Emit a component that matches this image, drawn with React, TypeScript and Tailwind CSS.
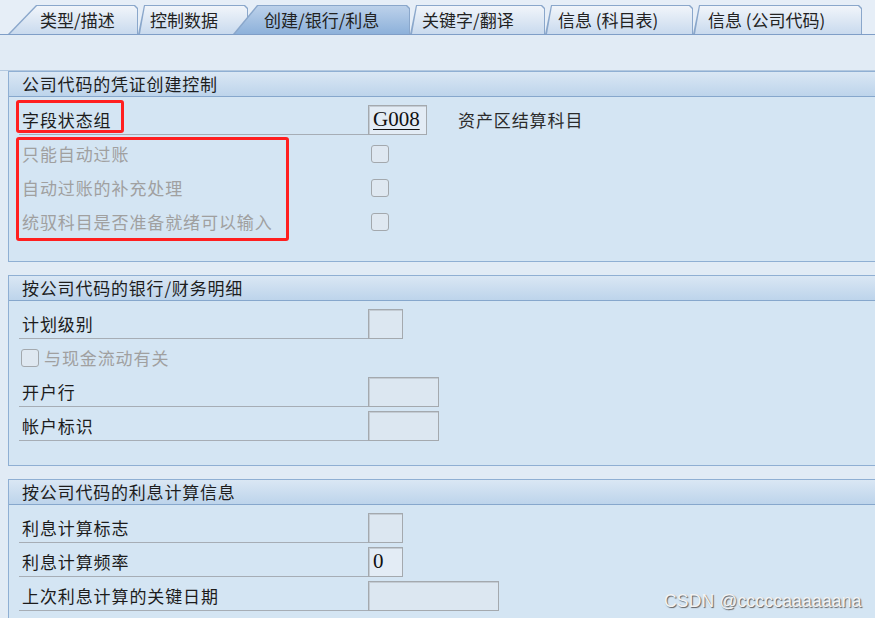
import React from "react";

const cjk = { fontFamily: '"Noto Sans CJK SC", "Noto Sans", sans-serif' };

const tabs = [
  { label: "类型/描述", width: 130, slant: 28, ml: 8, pl: 32, active: false },
  { label: "控制数据", width: 110, slant: 6, ml: 0, pl: 12, active: false },
  { label: "创建/银行/利息", width: 177, slant: 24, ml: -15, pl: 31, active: true },
  { label: "关键字/翻译", width: 135, slant: 6, ml: 0, pl: 12, active: false },
  { label: "信息 (科目表)", width: 148, slant: 6, ml: 0, pl: 13, active: false },
  { label: "信息 (公司代码)", width: 169, slant: 6, ml: 0, pl: 15, active: false },
];

function Tab({ label, width, slant, ml, pl, active }: (typeof tabs)[number]) {
  const outer = `polygon(${slant}px 0, calc(100% - 3px) 0, 100% 3px, 100% 100%, 0 100%)`;
  const inner = `polygon(${slant}px 0, calc(100% - 3px) 0, 100% 3px, 100% 100%, 1px 100%)`;
  return (
    <div className={`relative h-[29px] shrink-0 bg-[#8aa7cb] ${active ? "z-10" : ""}`} style={{ width, marginLeft: ml, clipPath: outer }}>
      <div
        className={`absolute inset-x-[1px] top-[1px] bottom-0 flex items-center text-[17px] text-[#222] ${active ? "bg-gradient-to-b from-[#bcd1ea] to-[#8db1da]" : "bg-gradient-to-b from-[#f1f5fa] to-[#c9daee]"}`}
        style={{ clipPath: inner, paddingLeft: pl - 1 }}
      >
        {label}
      </div>
    </div>
  );
}

function Input({ w, value }: { w: number; value?: string }) {
  return (
    <div
      className={`h-[30px] border border-[#a4a9ae] ${value ? "bg-[#e3ecf5]" : "bg-[#dce7f1]"} flex items-center pl-[4px] text-[21px] text-[#111] shadow-[inset_1px_1px_0_#c4ccd4]`}
      style={{ width: w, fontFamily: '"Liberation Serif", serif' }}
    >
      {value && <span className={value.length > 1 ? "underline decoration-1 underline-offset-[3px]" : ""}>{value}</span>}
    </div>
  );
}

function Checkbox() {
  return <div className="w-[18px] h-[18px] rounded-[3px] border border-[#a3a8ad] bg-[#dfe8f1]" />;
}

function FieldRow({ label, w, value, note }: { label: string; w: number; value?: string; note?: string }) {
  return (
    <div className="flex items-end h-[34px]">
      <div className="w-[349px] h-full flex items-center pl-[3px] pt-[4px] border-b border-[#a6adb5] text-[17px] tracking-[0.9px] text-[#1c1c1c]">{label}</div>
      <Input w={w} value={value} />
      {note && <div className="ml-[31px] self-center pt-[4px] text-[17px] tracking-[0.9px] text-[#2a2a2a]">{note}</div>}
    </div>
  );
}

function CheckRow({ label }: { label: string }) {
  return (
    <div className="flex items-center h-[34px] pt-[3px]">
      <div className="w-[349px] pl-[3px] text-[17px] tracking-[0.9px] text-[#a0a0a0]">{label}</div>
      <div className="ml-[3px]"><Checkbox /></div>
    </div>
  );
}

function Panel({ title, children, bodyH }: { title: string; children: React.ReactNode; bodyH: number }) {
  return (
    <div className="ml-[8px] border-l border-t border-b border-[#8fafd3]">
      <div className="h-[25px] flex items-center pl-[13px] border-b border-[#86a7cc] bg-gradient-to-b from-[#dae7f4] to-[#bdd4eb] text-[17px] tracking-[0.8px] text-[#1d1d1d]">{title}</div>
      <div className="bg-[#d4e5f3] pl-[10px] pt-[4px]" style={{ height: bodyH }}>{children}</div>
    </div>
  );
}

export default function App() {
  return (
    <div className="relative w-[875px] h-[618px] overflow-hidden bg-[#e1ebf5]" style={cjk}>
      <div className="flex items-end pt-[5px] border-b border-[#7f9ec7] bg-[#e6eef7]">
        {tabs.map((t) => <Tab key={t.label} {...t} />)}
      </div>
      <div className="h-[36px] border-b border-[#b3c8df]" />
      <div className="flex flex-col gap-[13px]">
        <Panel title="公司代码的凭证创建控制" bodyH={164}>
          <FieldRow label="字段状态组" w={59} value="G008" note="资产区结算科目" />
          <CheckRow label="只能自动过账" />
          <CheckRow label="自动过账的补充处理" />
          <CheckRow label="统驭科目是否准备就绪可以输入" />
        </Panel>
        <Panel title="按公司代码的银行/财务明细" bodyH={164}>
          <FieldRow label="计划级别" w={35} />
          <div className="flex items-center h-[34px] pl-[2px] pt-[3px]">
            <Checkbox />
            <span className="ml-[5px] text-[17px] tracking-[0.9px] text-[#a0a0a0]">与现金流动有关</span>
          </div>
          <FieldRow label="开户行" w={71} />
          <FieldRow label="帐户标识" w={71} />
        </Panel>
        <Panel title="按公司代码的利息计算信息" bodyH={164}>
          <FieldRow label="利息计算标志" w={35} />
          <FieldRow label="利息计算频率" w={35} value="0" />
          <FieldRow label="上次利息计算的关键日期" w={131} />
        </Panel>
      </div>

      <div className="absolute left-[16px] top-[100px] w-[108px] h-[33px] border-[3px] border-[#ff1f1f] rounded-[3px]" />
      <div className="absolute left-[16px] top-[137px] w-[273px] h-[104px] border-[3px] border-[#ff1f1f] rounded-[3px]" />

      <div
        className="absolute left-[664px] top-[588px] text-[17.5px] tracking-[0.2px] text-[#f3f3f3] [text-shadow:1px_1px_1px_#5e5e5e]"
        style={{ fontFamily: '"Liberation Sans", Arial, sans-serif' }}
      >
        CSDN @cccccaaaaaana
      </div>
    </div>
  );
}
